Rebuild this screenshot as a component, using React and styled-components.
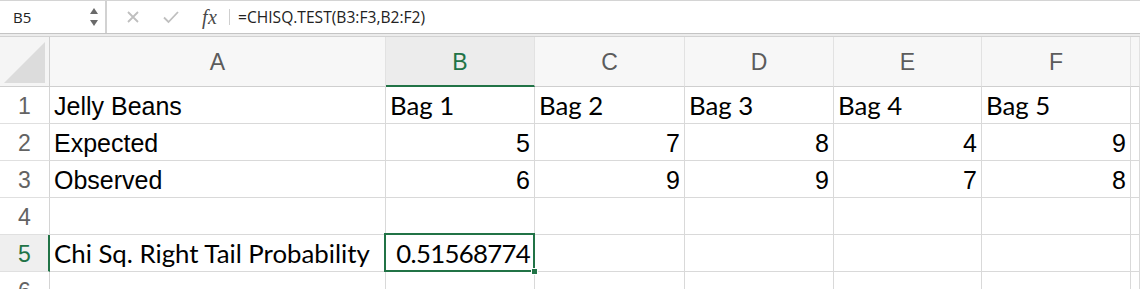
import React from "react";
import styled, { createGlobalStyle, css } from "styled-components";

const GREEN = "#217346";

const Global = createGlobalStyle`
  html, body { margin: 0; padding: 0; background: #ffffff; overflow: hidden; }
  * { box-sizing: border-box; }
`;

const Page = styled.div`
  width: 1140px;
  height: 289px;
  display: flex;
  flex-direction: column;
  background: #fff;
  overflow: hidden;
`;

const FormulaBar = styled.div`
  flex: none;
  height: 34px;
  display: flex;
  align-items: stretch;
  border-top: 1px solid #d4d4d4;
  border-bottom: 1px solid #c4c4c4;
  background: #fff;
  font-family: "Open Sans", "Liberation Sans", sans-serif;
  font-size: 15.6px;
  color: #222;
`;

const NameBox = styled.div`
  width: 107px;
  display: flex;
  align-items: center;
  justify-content: space-between;
  padding: 0 6px 0 13px;
  border-right: 2px solid #d2d2d2;
  font-size: 15px;
`;

const Spinner = styled.svg`
  width: 10px;
  height: 22px;
  display: block;
`;

const Tools = styled.div`
  width: 122px;
  display: flex;
  align-items: center;
  padding-left: 19px;
`;

const ToolIcon = styled.svg`
  display: block;
  flex: none;
  margin-left: ${(p) => p.$gap || 0}px;
`;

const Fx = styled.span`
  font-family: "Liberation Serif", "DejaVu Serif", serif;
  font-style: italic;
  font-size: 20px;
  color: #4a4a4a;
  margin-left: 22px;
  letter-spacing: 0.5px;
`;

const Divider = styled.div`
  width: 1px;
  align-self: center;
  height: 16px;
  background: #cfcfcf;
`;

const Formula = styled.div`
  display: flex;
  align-items: center;
  padding-left: 8px;
  flex: 1;
`;

const Gap = styled.div`
  flex: none;
  height: 3px;
  background: #ececec;
  border-bottom: 1px solid #d2d2d2;
`;

const Sheet = styled.div`
  flex: none;
  display: grid;
  grid-template-columns: 50px 336px 149px 150px 149px 148px 149px 1fr;
  grid-template-rows: 50px repeat(6, 37px);
`;

const Corner = styled.div`
  background: #f5f5f5;
  border-right: 1px solid #d0d0d0;
  border-bottom: 1px solid #cfcfcf;
  display: flex;
  align-items: flex-end;
  justify-content: flex-end;
  padding: 0 4px 3px 0;
`;

const ColHead = styled.div`
  background: ${(p) => (p.$active ? "#ececec" : "#f7f7f7")};
  border-right: 1px solid #e2e2e2;
  border-bottom: ${(p) => (p.$active ? `2px solid ${GREEN}` : "1px solid #cfcfcf")};
  display: flex;
  align-items: center;
  justify-content: center;
  padding-top: 2px;
  font-family: "Liberation Sans", Arial, sans-serif;
  font-size: 23px;
  color: ${(p) => (p.$active ? GREEN : "#5c5c5c")};
`;

const RowHead = styled.div`
  background: ${(p) => (p.$active ? "#efefef" : "#fff")};
  border-right: ${(p) => (p.$active ? `2px solid ${GREEN}` : "1px solid #d4d4d4")};
  border-bottom: 1px solid #e0e0e0;
  display: flex;
  align-items: center;
  justify-content: center;
  padding: 3px 0 0 ${(p) => (p.$active ? "1px" : "0")};
  font-family: "Liberation Sans", Arial, sans-serif;
  font-size: 23px;
  color: ${(p) => (p.$active ? GREEN : "#636363")};
`;

const Cell = styled.div`
  position: relative;
  border-right: 1px solid #d9d9d9;
  border-bottom: 1px solid #d9d9d9;
  display: flex;
  align-items: center;
  justify-content: ${(p) => (p.$num ? "flex-end" : "flex-start")};
  padding-right: ${(p) => (p.$num ? "4px" : "0")};
  padding-left: ${(p) => (p.$num ? "0" : "4px")};
  color: #000;
  white-space: nowrap;
  ${(p) =>
    p.$cal
      ? css`
          font-family: "Lato", "Carlito", sans-serif;
          font-size: 25.8px;
          padding-top: 0;
          padding-bottom: 1px;
        `
      : css`
          font-family: "Liberation Sans", Arial, sans-serif;
          font-size: 25px;
          padding-top: 3px;
        `}
  ${(p) =>
    p.$selected &&
    css`
      letter-spacing: -0.7px;
      &::after {
        content: "";
        position: absolute;
        left: -2px;
        top: -2px;
        right: -1px;
        bottom: -1px;
        border: 2px solid ${GREEN};
        pointer-events: none;
      }
    `}
`;

const Handle = styled.span`
  position: absolute;
  right: -4px;
  bottom: -4px;
  width: 7px;
  height: 7px;
  background: ${GREEN};
  border: 1px solid #fff;
  z-index: 2;
`;

const cols = ["A", "B", "C", "D", "E", "F", ""];

const rows = [
  [
    { t: "Jelly Beans" },
    { t: "Bag 1", cal: true },
    { t: "Bag 2", cal: true },
    { t: "Bag 3", cal: true },
    { t: "Bag 4", cal: true },
    { t: "Bag 5", cal: true },
  ],
  [
    { t: "Expected" },
    { t: "5", num: true },
    { t: "7", num: true },
    { t: "8", num: true },
    { t: "4", num: true },
    { t: "9", num: true },
  ],
  [
    { t: "Observed" },
    { t: "6", num: true },
    { t: "9", num: true },
    { t: "9", num: true },
    { t: "7", num: true },
    { t: "8", num: true },
  ],
  [{}, {}, {}, {}, {}, {}],
  [
    { t: "Chi Sq. Right Tail Probability", cal: true },
    { t: "0.51568774", num: true, cal: true, selected: true },
    {},
    {},
    {},
    {},
  ],
  [{}, {}, {}, {}, {}, {}],
];

export default function App() {
  return (
    <Page>
      <Global />
      <FormulaBar>
        <NameBox>
          <span>B5</span>
          <Spinner viewBox="0 0 10 22">
            <path d="M1 8 L5 2 L9 8 Z" fill="#6a6a6a" />
            <path d="M1 14 L5 20 L9 14 Z" fill="#6a6a6a" />
          </Spinner>
        </NameBox>
        <Tools>
          <ToolIcon width="14" height="14" viewBox="0 0 14 14">
            <path d="M2 2 L12 12 M12 2 L2 12" stroke="#bfbfbf" strokeWidth="1.8" fill="none" />
          </ToolIcon>
          <ToolIcon width="18" height="14" viewBox="0 0 18 14" $gap={22}>
            <path d="M2 7.5 L6.5 12 L16 2" stroke="#bfbfbf" strokeWidth="1.8" fill="none" />
          </ToolIcon>
          <Fx>fx</Fx>
        </Tools>
        <Divider />
        <Formula>=CHISQ.TEST(B3:F3,B2:F2)</Formula>
      </FormulaBar>
      <Gap />
      <Sheet>
        <Corner>
          <svg width="41" height="41" viewBox="0 0 41 41">
            <path d="M0 41 L41 0 L41 41 Z" fill="#dcdcdc" />
          </svg>
        </Corner>
        {cols.map((c, i) => (
          <ColHead key={i} $active={c === "B"}>
            {c}
          </ColHead>
        ))}
        {rows.map((r, ri) => (
          <React.Fragment key={ri}>
            <RowHead $active={ri === 4}>{ri + 1}</RowHead>
            {r.map((cell, ci) => (
              <Cell key={ci} $num={cell.num} $cal={cell.cal} $selected={cell.selected}>
                {cell.t}
                {cell.selected && <Handle />}
              </Cell>
            ))}
            <Cell />
          </React.Fragment>
        ))}
      </Sheet>
    </Page>
  );
}
